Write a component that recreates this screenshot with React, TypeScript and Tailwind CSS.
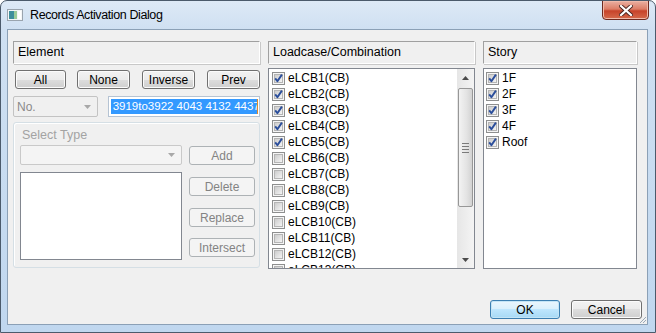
import React from 'react';

// Win7 style checkbox
function CheckBox({ on }: { on: boolean }) {
  return (
    <svg width="13" height="13" viewBox="0 0 13 13" className="shrink-0">
      <defs>
        <linearGradient id="cbFill" x1="0" y1="0" x2="1" y2="1">
          <stop offset="0" stopColor="#c9c9c9" />
          <stop offset="1" stopColor="#f7f7f7" />
        </linearGradient>
      </defs>
      <rect x="0.5" y="0.5" width="12" height="12" fill="#f5f5f5" stroke="#8e8f8f" />
      <rect x="2.5" y="2.5" width="8" height="8" fill="url(#cbFill)" stroke="#b5b5b5" />
      {on && (
        <path d="M3.2 6.4 L5.4 9.2 L9.9 2.6" fill="none" stroke="#2b4e9b" strokeWidth="1.9" strokeLinejoin="round" />
      )}
    </svg>
  );
}

function Btn({ label, className = '', disabled = false }: { label: string; className?: string; disabled?: boolean }) {
  const look = disabled
    ? 'border-[#adb2b5] bg-[#f4f4f4] text-[#838383]'
    : 'border-[#707070] bg-[linear-gradient(#f2f2f2_0%,#ebebeb_50%,#dddddd_50%,#cfcfcf_100%)] text-black shadow-[inset_0_0_0_1px_#fbfbfb]';
  return (
    <div className={`flex h-[19px] items-center justify-center rounded-[3px] border text-[12px] leading-none ${look} ${className}`}>
      {label}
    </div>
  );
}

function Header({ text }: { text: string }) {
  return (
    <div className="flex h-[23px] items-center border border-[#a0a0a0] border-b-white border-r-white pl-[4px] text-[12.5px] shadow-[1px_1px_0_#c8c8c8]">
      {text}
    </div>
  );
}

function Arrow({ up }: { up: boolean }) {
  return (
    <svg width="7" height="4" viewBox="0 0 7 4">
      <path d={up ? 'M0 4 L3.5 0 L7 4 Z' : 'M0 0 L3.5 4 L7 0 Z'} fill="#4a4a4a" />
    </svg>
  );
}

function ComboArrow() {
  return (
    <svg width="7" height="4" viewBox="0 0 7 4">
      <path d="M0 0 L3.5 4 L7 0 Z" fill="#a8a8a8" />
    </svg>
  );
}

const loadcases = Array.from({ length: 13 }, (_, i) => ({ name: `eLCB${i + 1}(CB)`, on: i < 5 }));
const stories = ['1F', '2F', '3F', '4F', 'Roof'];

export default function App() {
  return (
    <div
      className="relative flex h-[333px] w-[656px] flex-col overflow-hidden rounded-t-[7px] border border-[#4b5a6b] bg-[linear-gradient(180deg,#dde9f6_0px,#cfe0f2_28px,#c0d7ef_100%)] text-black"
      style={{ fontFamily: '"Liberation Sans", Arial, sans-serif' }}
    >
      {/* title bar */}
      <div className="flex h-[28px] shrink-0 items-center pl-[6px]">
        <svg width="16" height="12" viewBox="0 0 16 12" className="shrink-0">
          <rect x="0.5" y="0.5" width="15" height="11" fill="#f4f6f8" stroke="#9aa4ae" />
          <rect x="2" y="2" width="5" height="8" fill="#3f8f9c" />
          <rect x="7" y="2" width="3" height="8" fill="#9ccc9a" />
          <rect x="11" y="2" width="3" height="8" fill="#ffffff" />
        </svg>
        <span className="ml-[7px] text-[12.5px] tracking-[-0.4px]">Records Activation Dialog</span>
      </div>

      {/* close button */}
      <div className="absolute right-[6px] top-[-1px] flex h-[20px] w-[47px] items-center justify-center rounded-b-[4px] border border-[#6e2a20] bg-[linear-gradient(#eab0a2_0%,#dc7d66_45%,#c7432a_55%,#d56a4c_100%)] shadow-[inset_0_0_0_1px_#f0b9a9]">
        <svg width="14" height="11" viewBox="0 0 14 11">
          <path d="M2 1 L12 10 M12 1 L2 10" stroke="#4b2520" strokeWidth="4" strokeLinecap="square" />
          <path d="M2 1 L12 10 M12 1 L2 10" stroke="#ffffff" strokeWidth="2.2" strokeLinecap="square" />
        </svg>
      </div>

      {/* client area */}
      <div className="ml-[6px] mr-[7px] flex h-[296px] shrink-0 flex-col border border-[#8ba0b6] bg-[#f0f0f0] pl-[5px] pt-[11px] pr-[5px]">
        <div className="flex gap-[8px]">
          {/* Element */}
          <div className="flex w-[247px] flex-col">
            <Header text="Element" />
            <div className="mt-[6px] flex pl-[2px]">
              <Btn label="All" className="w-[51px]" />
              <Btn label="None" className="ml-[11px] w-[53px]" />
              <Btn label="Inverse" className="ml-[12px] w-[53px]" />
              <Btn label="Prev" className="ml-[12px] w-[53px]" />
            </div>
            <div className="mt-[7px] flex">
              <div className="flex h-[21px] w-[85px] items-center justify-between rounded-[2px] border border-[#c3c3c3] bg-[#f0f0f0] pl-[3px] pr-[6px] text-[12px] text-[#8a8a8a]">
                <span>No.</span>
                <ComboArrow />
              </div>
              <div className="ml-[10px] flex h-[21px] w-[153px] items-center overflow-hidden border border-[#b5c3d3] bg-white pl-[2px]">
                <div className="flex h-[15px] w-[146px] shrink-0 items-center overflow-hidden whitespace-nowrap bg-[#3399ff] pl-[2px] text-[11.5px] text-white">
                  3919to3922 4043 4132 4437 4440
                </div>
                <div className="h-[15px] w-[1px] shrink-0 bg-[#e08a2a]" />
              </div>
            </div>

            {/* Select Type group */}
            <div className="mt-[5px] flex h-[146px] flex-col rounded-[3px] border border-[#d5dfe5] pl-[6px] shadow-[inset_1px_1px_0_#ffffff]">
              <div className="ml-[2px] mt-[5px] h-[14px] text-[12.5px] leading-[14px] text-[#a3a3a3]">Select Type</div>
              <div className="mt-[3px] flex items-start">
                <div className="flex h-[20px] w-[162px] items-center justify-end rounded-[2px] border border-[#c9c9c9] bg-[#f4f4f4] pr-[6px]">
                  <ComboArrow />
                </div>
                <Btn label="Add" disabled className="ml-[7px] mt-[1px] w-[66px]" />
              </div>
              <div className="mt-[7px] flex items-start">
                <div className="h-[88px] w-[162px] border border-[#828790] bg-white" />
                <div className="ml-[7px] flex flex-col">
                  <Btn label="Delete" disabled className="mt-[5px] w-[66px]" />
                  <Btn label="Replace" disabled className="mt-[12px] w-[66px]" />
                  <Btn label="Intersect" disabled className="mt-[11px] w-[66px]" />
                </div>
              </div>
            </div>
          </div>

          {/* Loadcase/Combination */}
          <div className="flex w-[207px] flex-col">
            <Header text="Loadcase/Combination" />
            <div className="mt-[4px] flex h-[201px] border border-[#828790] bg-white">
              <div className="flex flex-1 flex-col overflow-hidden pt-[1px]">
                {loadcases.map((lc) => (
                  <div key={lc.name} className="flex h-[16px] shrink-0 items-center pl-[3px] text-[12px]">
                    <CheckBox on={lc.on} />
                    <span className="ml-[3px]">{lc.name}</span>
                  </div>
                ))}
              </div>
              {/* scrollbar */}
              <div className="flex w-[17px] shrink-0 flex-col items-center bg-[linear-gradient(90deg,#e6e6e6,#f4f4f4)]">
                <div className="flex h-[17px] items-center justify-center">
                  <Arrow up />
                </div>
                <div className="mt-[2px] flex h-[119px] w-[15px] flex-col items-center justify-center gap-[2px] rounded-[2px] border border-[#979797] bg-[linear-gradient(90deg,#f3f3f3,#e3e3e3_60%,#d2d2d2)]">
                  <div className="h-[1px] w-[7px] bg-[#7a7a7a]" />
                  <div className="h-[1px] w-[7px] bg-[#7a7a7a]" />
                  <div className="h-[1px] w-[7px] bg-[#7a7a7a]" />
                  <div className="h-[1px] w-[7px] bg-[#7a7a7a]" />
                </div>
                <div className="flex-1" />
                <div className="flex h-[17px] items-center justify-center">
                  <Arrow up={false} />
                </div>
              </div>
            </div>
          </div>

          {/* Story */}
          <div className="flex w-[154px] flex-col">
            <Header text="Story" />
            <div className="mt-[4px] flex h-[201px] flex-col border border-[#828790] bg-white pt-[1px]">
              {stories.map((s) => (
                <div key={s} className="flex h-[16px] items-center pl-[2px] text-[12px]">
                  <CheckBox on />
                  <span className="ml-[3px]">{s}</span>
                </div>
              ))}
            </div>
          </div>
        </div>

        {/* OK / Cancel */}
        <div className="mt-[31px] flex justify-end">
          <div className="flex h-[19px] w-[70px] items-center justify-center rounded-[3px] border border-[#3c7fb1] bg-[linear-gradient(#eaf6fd_0%,#d9f0fc_50%,#bee6fd_50%,#a7d9f5_100%)] text-[12px] shadow-[inset_0_0_0_1px_#c4e5f6]">
            OK
          </div>
          <Btn label="Cancel" className="ml-[11px] w-[71px]" />
        </div>
      </div>

      {/* resize grip */}
      <svg width="9" height="9" viewBox="0 0 9 9" className="absolute bottom-[8px] right-[8px]">
        <path d="M8 2 L2 8 M8 5 L5 8" stroke="#9aa8b6" strokeWidth="1" />
      </svg>
    </div>
  );
}
